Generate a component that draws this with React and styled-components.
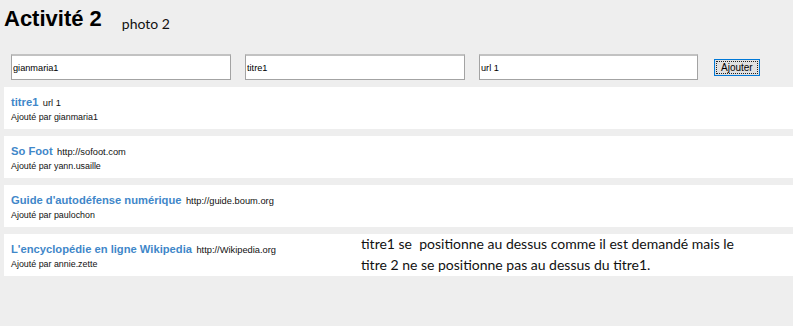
import React from "react";
import styled, { createGlobalStyle } from "styled-components";

const GlobalStyle = createGlobalStyle`
  html, body { margin: 0; padding: 0; background: #eeeeee; }
  body { font-family: "Liberation Sans", Arial, sans-serif; color: #111; }
`;

const Page = styled.div`
  position: relative;
  min-height: 326px;
  padding: 0 0 0 4px;
  background: #eeeeee;
  overflow: hidden;
`;

const Header = styled.header`
  display: flex;
  align-items: flex-start;
  gap: 20px;
  padding-top: 6px;
  height: 26px;
`;

const Title = styled.h1`
  margin: 0;
  font-family: "Liberation Sans", Arial, sans-serif;
  font-size: 22px;
  line-height: 26px;
  font-weight: 700;
  color: #000;
`;

const Note = styled.span`
  margin-top: 9px;
  font-family: Lato, "Open Sans", sans-serif;
  font-size: 14px;
  line-height: 17px;
  color: #111;
`;

const FormRow = styled.form`
  display: flex;
  align-items: center;
  gap: 14px;
  margin-top: 22px;
  padding-left: 7px;
`;

const Field = styled.input`
  box-sizing: border-box;
  width: ${(p) => p.$w || 220}px;
  height: 26px;
  margin: 0;
  padding: 0 1px;
  border: 1px solid #a3a3a3;
  border-top: 2px solid #c2c2c2;
  background: #fff;
  font-family: "Liberation Sans", Arial, sans-serif;
  font-size: 9.2px;
  color: #000;
  outline: none;
`;

const Button = styled.button`
  box-sizing: border-box;
  margin-left: 2px;
  height: 17px;
  padding: 1px;
  border: 1px solid #0078d7;
  background: #e1e1e1;
  font-family: "Liberation Sans", Arial, sans-serif;
  font-size: 10px;
  color: #000;
  display: flex;
  align-items: stretch;
`;

const FocusRing = styled.span`
  display: flex;
  align-items: center;
  padding: 0 4px;
  border: 1px dotted #222;
  line-height: 11px;
`;

const List = styled.div`
  display: flex;
  flex-direction: column;
  gap: 7px;
  margin-top: 7px;
`;

const Card = styled.article`
  box-sizing: border-box;
  height: 42px;
  padding: 6px 7px 8px;
  background: #fff;
`;

const TitleLine = styled.div`
  line-height: 15px;
  white-space: nowrap;
`;

const LinkTitle = styled.a`
  font-family: "Liberation Sans", Arial, sans-serif;
  font-size: 11.2px;
  font-weight: 700;
  color: #3f87c9;
  text-decoration: none;
`;

const Url = styled.span`
  font-family: "Liberation Sans", Arial, sans-serif;
  font-size: 9.3px;
  color: #111;
`;

const Meta = styled.div`
  font-family: "Liberation Sans", Arial, sans-serif;
  font-size: 8.9px;
  line-height: 13px;
  color: #111;
`;

const Annotation = styled.p`
  position: absolute;
  left: 361px;
  top: 233px;
  margin: 0;
  font-family: Lato, "Open Sans", sans-serif;
  font-size: 14px;
  line-height: 21px;
  color: #111;
  white-space: pre;
`;

const links = [
  { title: "titre1", url: "url 1", by: "gianmaria1" },
  { title: "So Foot", url: "http://sofoot.com", by: "yann.usaille" },
  { title: "Guide d'autodéfense numérique", url: "http://guide.boum.org", by: "paulochon" },
  { title: "L'encyclopédie en ligne Wikipedia", url: "http://Wikipedia.org", by: "annie.zette" },
];

export default function App() {
  return (
    <>
      <GlobalStyle />
      <Page>
        <Header>
          <Title>Activité 2</Title>
          <Note>photo 2</Note>
        </Header>
        <FormRow onSubmit={(e) => e.preventDefault()}>
          <Field defaultValue="gianmaria1" />
          <Field defaultValue="titre1" />
          <Field defaultValue="url 1" $w={219} />
          <Button type="submit">
            <FocusRing>Ajouter</FocusRing>
          </Button>
        </FormRow>
        <List>
          {links.map((l) => (
            <Card key={l.title}>
              <TitleLine>
                <LinkTitle href="#">{l.title}</LinkTitle> <Url>{l.url}</Url>
              </TitleLine>
              <Meta>Ajouté par {l.by}</Meta>
            </Card>
          ))}
        </List>
        <Annotation>
          {"titre1 se  positionne au dessus comme il est demandé mais le\ntitre 2 ne se positionne pas au dessus du titre1."}
        </Annotation>
      </Page>
    </>
  );
}
